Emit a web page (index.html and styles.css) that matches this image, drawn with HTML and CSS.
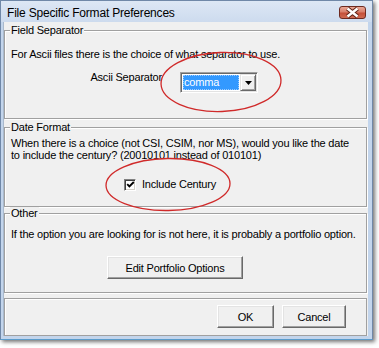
FILE: index.html
```html
<!DOCTYPE html>
<html>
<head>
<meta charset="utf-8">
<link rel="stylesheet" href="styles.css">
</head>
<body>
<div class="window">
  <div class="titlebar">
    <span class="title">File Specific Format Preferences</span>
    <span class="close">
      <svg width="27" height="13" viewBox="0 0 27 13">
        <path d="M8.5 2.5 L18.5 10.5 M18.5 2.5 L8.5 10.5" stroke="#5e2418" stroke-width="4.4" fill="none"/>
        <path d="M8.5 2.5 L18.5 10.5 M18.5 2.5 L8.5 10.5" stroke="#ffffff" stroke-width="2.4" fill="none"/>
      </svg>
    </span>
  </div>
  <div class="client">
    <fieldset class="group g1">
      <legend>Field Separator</legend>
      <p class="txt">For Ascii files there is the choice of what separator to use.</p>
      <div class="sep-row">
        <span class="lbl">Ascii Separator</span>
        <span class="combo">
          <span class="sel">comma</span>
          <span class="ddbtn"><svg width="7" height="4" viewBox="0 0 7 4"><polygon points="0,0 7,0 3.5,4" fill="#000"/></svg></span>
        </span>
      </div>
    </fieldset>
    <fieldset class="group g2">
      <legend>Date Format</legend>
      <p class="txt lines">When there is a choice (not CSI, CSIM, nor MS), would you like the date<br>to include the century? (20010101 instead of 010101)</p>
      <div class="chk-row">
        <span class="chk"><svg width="9" height="9" viewBox="0 0 9 9"><path d="M1.2 4.2 L3.4 6.4 L7.8 2" stroke="#000" stroke-width="1.9" fill="none"/></svg></span>
        <span class="chk-lbl">Include Century</span>
      </div>
    </fieldset>
    <fieldset class="group g3">
      <legend>Other</legend>
      <p class="txt">If the option you are looking for is not here, it is probably a portfolio option.</p>
      <div class="btn-row"><button class="btn edit">Edit Portfolio Options</button></div>
    </fieldset>
    <div class="bottom">
      <button class="btn ok">OK</button>
      <button class="btn cancel">Cancel</button>
    </div>
  </div>
</div>
<svg class="annot" width="379" height="348" viewBox="0 0 379 348">
  <ellipse cx="221" cy="82" rx="60" ry="29.5" transform="rotate(-2 221 82)" fill="none" stroke="#d02a2a" stroke-width="1.3"/>
  <ellipse cx="168" cy="184.5" rx="62" ry="26" transform="rotate(-1 168 184)" fill="none" stroke="#d02a2a" stroke-width="1.3"/>
</svg>
</body>
</html>
```

FILE: styles.css
```css
* { box-sizing: border-box; }
body {
  margin: 0;
  width: 379px;
  height: 348px;
  background: #ffffff;
  position: relative;
  font-family: "Liberation Sans", Arial, sans-serif;
  overflow: hidden;
}
.window {
  width: 373px;
  height: 340px;
  background: #c3d5ec;
  border: 1px solid #7088a8;
  border-bottom-color: #5a9ccc;
  box-shadow: 2px 2px 4px rgba(0,0,0,0.55);
  display: flex;
  flex-direction: column;
}
.titlebar {
  height: 21px;
  display: flex;
  align-items: center;
  justify-content: space-between;
  padding: 0 6px 0 6px;
  background: linear-gradient(#dde7f5, #cddbee);
}
.title {
  font-size: 12px;
  letter-spacing: -0.2px;
  color: #000;
  padding-top: 2px;
}
.close {
  width: 27px;
  height: 13px;
  border: 1px solid #6e2a20;
  border-radius: 3px;
  background: linear-gradient(#eaa796 0%, #d9806c 45%, #c5503a 55%, #cf6a52 100%);
  display: flex;
  align-items: center;
  justify-content: center;
  margin-top: 2px;
}
.close svg { display: block; margin: -1px; }
.client {
  flex: 1;
  margin: 0 4px 3px 2px;
  background: #f0f0f0;
  display: flex;
  flex-direction: column;
  border-left: 1px solid #a9b9cc;
}
.group {
  margin: 0 1px 0 0;
  padding: 0 6px;
  border: 1px solid #a0a0a0;
  box-shadow: 1px 1px 0 #ffffff, inset 1px 1px 0 #ffffff;
  min-width: 0;
  font-size: 11px;
  letter-spacing: -0.2px;
}
.group legend {
  padding: 0 1px;
  margin-left: -1px;
  line-height: 13px;
  font-size: 11px;
  background: #f0f0f0;
  color: #000;
}
.g1 { margin-top: 2px; height: 95px; padding-top: 11px; }
.g2 { margin-top: 2px; height: 86px; padding-top: 3px; }
.g3 { margin-top: 0; height: 86px; padding-top: 8px; }
.txt {
  margin: 0;
  line-height: 13px;
  color: #000;
  white-space: nowrap;
}
.txt.lines { line-height: 12px; }
.sep-row {
  display: flex;
  align-items: flex-start;
  margin-top: 11px;
}
.lbl {
  width: 151px;
  text-align: right;
  line-height: 13px;
  margin-top: -1px;
}
.combo {
  margin-left: 18px;
  width: 78px;
  height: 21px;
  display: flex;
  padding: 1px;
  background: #ffffff;
  border: 1px solid;
  border-color: #a0a0a0 #ffffff #ffffff #a0a0a0;
  box-shadow: inset 1px 1px 0 #696969, inset -1px -1px 0 #e3e3e3;
}
.sel {
  flex: 1;
  margin: 1px;
  background: #3399ff;
  color: #ffffff;
  line-height: 15px;
  padding-left: 1px;
  outline: 1px dotted #9ccbff;
  outline-offset: -1px;
}
.ddbtn {
  width: 16px;
  background: #f0f0f0;
  border: 1px solid;
  border-color: #e3e3e3 #696969 #696969 #e3e3e3;
  box-shadow: inset 1px 1px 0 #ffffff, inset -1px -1px 0 #a0a0a0;
  display: flex;
  align-items: center;
  justify-content: center;
}
.ddbtn svg { display: block; }
.chk-row {
  display: flex;
  align-items: center;
  height: 13px;
  margin-top: 17px;
  padding-left: 113px;
}
.chk {
  width: 12px;
  height: 12px;
  background: #ffffff;
  border: 1px solid;
  border-color: #808080 #ffffff #ffffff #808080;
  box-shadow: inset 1px 1px 0 #404040, inset -1px -1px 0 #d4d0c8;
  display: flex;
  align-items: center;
  justify-content: center;
}
.chk svg { display: block; }
.chk-lbl { margin-left: 6px; line-height: 13px; }
.btn-row { margin-top: 15px; padding-left: 96px; }
.btn {
  height: 23px;
  padding: 0;
  font-family: "Liberation Sans", Arial, sans-serif;
  font-size: 11px;
  letter-spacing: -0.2px;
  color: #000;
  background: #f0f0f0;
  border: 1px solid;
  border-color: #ffffff #696969 #696969 #ffffff;
  box-shadow: inset -1px -1px 0 #a0a0a0, inset 1px 1px 0 #e3e3e3;
  display: block;
}
.edit { width: 136px; }
.bottom {
  margin: 5px 1px 0 0;
  height: 38px;
  border: 1px solid #a0a0a0;
  box-shadow: inset 1px 1px 0 #ffffff;
  display: flex;
  justify-content: flex-end;
  gap: 8px;
  padding: 6px 20px 0 0;
}
.ok { width: 57px; }
.cancel { width: 64px; }
.annot {
  position: absolute;
  left: 0;
  top: 0;
  pointer-events: none;
}
```
